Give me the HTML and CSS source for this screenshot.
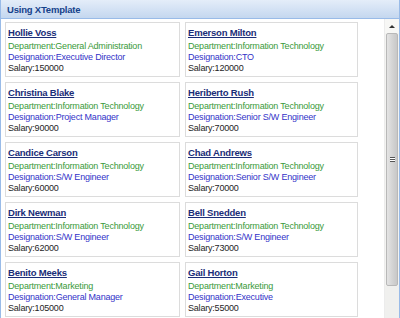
FILE: index.html
```html
<!DOCTYPE html>
<html>
<head>
    <link rel="stylesheet" href="styles.css">
</head>
<body>
    <div class="panel">
        <div class="panel-header">Using XTemplate</div>
        <div class="panel-body">
            <div class="list">
                <div class="card">
                    <div class="name">Hollie Voss</div>
                    <div class="dept">Department:General Administration</div>
                    <div class="desig">Designation:Executive Director</div>
                    <div class="salary">Salary:150000</div>
                </div>
                <div class="card">
                    <div class="name">Emerson Milton</div>
                    <div class="dept">Department:Information Technology</div>
                    <div class="desig">Designation:CTO</div>
                    <div class="salary">Salary:120000</div>
                </div>
                <div class="card">
                    <div class="name">Christina Blake</div>
                    <div class="dept">Department:Information Technology</div>
                    <div class="desig">Designation:Project Manager</div>
                    <div class="salary">Salary:90000</div>
                </div>
                <div class="card">
                    <div class="name">Heriberto Rush</div>
                    <div class="dept">Department:Information Technology</div>
                    <div class="desig">Designation:Senior S/W Engineer</div>
                    <div class="salary">Salary:70000</div>
                </div>
                <div class="card">
                    <div class="name">Candice Carson</div>
                    <div class="dept">Department:Information Technology</div>
                    <div class="desig">Designation:S/W Engineer</div>
                    <div class="salary">Salary:60000</div>
                </div>
                <div class="card">
                    <div class="name">Chad Andrews</div>
                    <div class="dept">Department:Information Technology</div>
                    <div class="desig">Designation:Senior S/W Engineer</div>
                    <div class="salary">Salary:70000</div>
                </div>
                <div class="card">
                    <div class="name">Dirk Newman</div>
                    <div class="dept">Department:Information Technology</div>
                    <div class="desig">Designation:S/W Engineer</div>
                    <div class="salary">Salary:62000</div>
                </div>
                <div class="card">
                    <div class="name">Bell Snedden</div>
                    <div class="dept">Department:Information Technology</div>
                    <div class="desig">Designation:S/W Engineer</div>
                    <div class="salary">Salary:73000</div>
                </div>
                <div class="card">
                    <div class="name">Benito Meeks</div>
                    <div class="dept">Department:Marketing</div>
                    <div class="desig">Designation:General Manager</div>
                    <div class="salary">Salary:105000</div>
                </div>
                <div class="card">
                    <div class="name">Gail Horton</div>
                    <div class="dept">Department:Marketing</div>
                    <div class="desig">Designation:Executive</div>
                    <div class="salary">Salary:55000</div>
                </div>
            </div>
            <div class="scrollbar">
                <div class="scroll-btn"><span class="arrow-up"></span></div>
                <div class="scroll-thumb"><span class="grip"></span></div>
                <div class="scroll-track"></div>
            </div>
        </div>
    </div>
</body>
</html>
```

FILE: styles.css
```css
body {
    margin: 0;
    font-family: "Liberation Sans", Arial, sans-serif;
    background: #fff;
}

.panel {
    width: 400px;
    height: 318px;
    box-sizing: border-box;
    border-left: 1px solid #99bbe8;
    border-right: 1px solid #99bbe8;
    display: flex;
    flex-direction: column;
    overflow: hidden;
}

.panel-header {
    height: 19px;
    line-height: 20px;
    box-sizing: border-box;
    padding-left: 6px;
    font-size: 9.5px;
    font-weight: bold;
    letter-spacing: -0.2px;
    color: #15428b;
    background: linear-gradient(#e4edf9, #c4d7ef);
    border-bottom: 1px solid #99bbe8;
}

.panel-body {
    flex: 1;
    display: flex;
    min-height: 0;
}

.list {
    flex: 1;
    display: grid;
    grid-template-columns: 175px 173px;
    grid-auto-rows: 55px;
    column-gap: 5px;
    row-gap: 5px;
    padding: 3px 0 0 4px;
    overflow: hidden;
}

.card {
    border: 1px solid #dcdcdc;
    padding: 3px 2px 2px 2px;
    font-size: 9px;
    letter-spacing: -0.2px;
    line-height: 11px;
    white-space: nowrap;
}

.name {
    font-size: 9.5px;
    font-weight: bold;
    letter-spacing: -0.2px;
    line-height: 14px;
    color: #1a2d78;
    text-decoration: underline;
    margin-bottom: 1px;
}

.dept {
    color: #3a9a3a;
}

.desig {
    color: #3333c8;
}

.salary {
    color: #1e1e1e;
}

/* fake classic scrollbar */
.scrollbar {
    width: 14px;
    display: flex;
    flex-direction: column;
    background: #f3f3f1;
    border-left: 1px solid #ececec;
}

.scroll-btn {
    height: 14px;
    display: flex;
    align-items: center;
    justify-content: center;
    background: #f7f7f5;
}

.arrow-up {
    width: 0;
    height: 0;
    border-left: 3px solid transparent;
    border-right: 3px solid transparent;
    border-bottom: 3px solid #333;
}

.scroll-thumb {
    height: 251px;
    margin: 0 1px;
    border: 1px solid #b8b8b8;
    border-radius: 2px;
    background: linear-gradient(to right, #e4e4e4, #d2d2d2 60%, #c8c8c8);
    display: flex;
    align-items: center;
    justify-content: center;
}

.grip {
    width: 5px;
    height: 5px;
    border-top: 1px solid #555;
    border-bottom: 1px solid #555;
    background: linear-gradient(#fff 0 1px, #555 1px 2px, #fff 2px 3px);
    box-sizing: border-box;
}

.scroll-track {
    flex: 1;
    background: #f0f0ee;
}
```
